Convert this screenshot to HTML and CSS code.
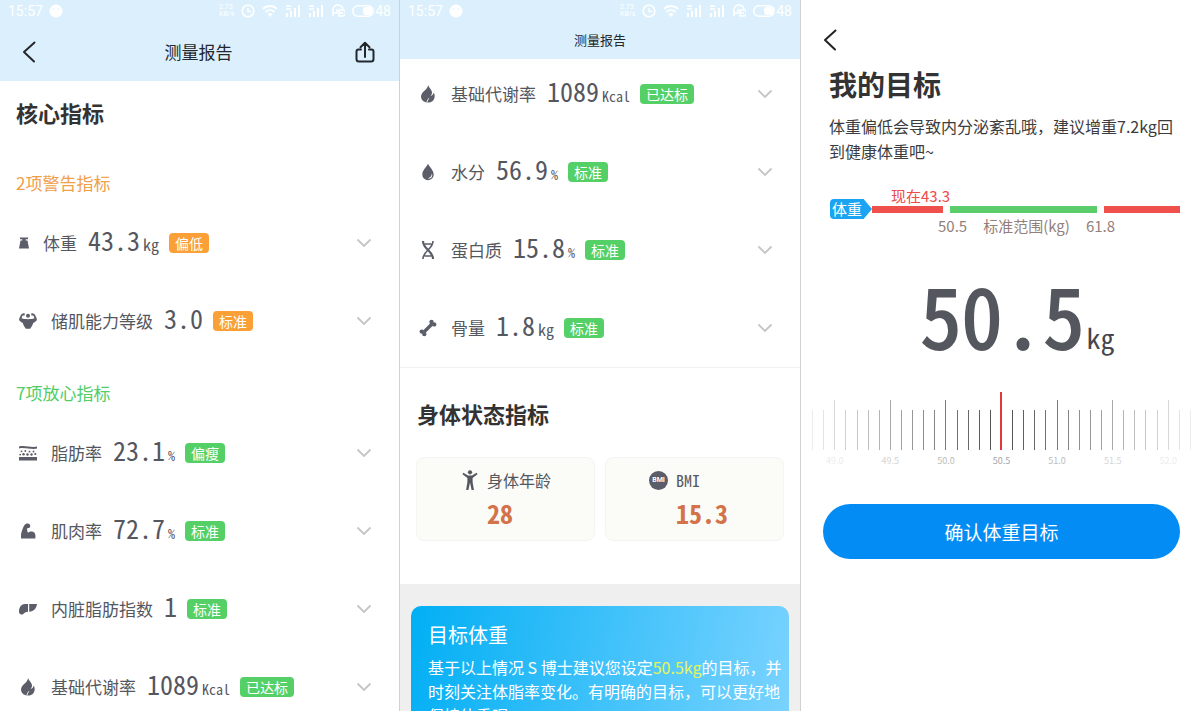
FILE: index.html
```html
<!DOCTYPE html>
<html lang="zh-CN">
<head>
  <meta charset="UTF-8" />
  <title>测量报告</title>
  <meta name="viewport" content="width=device-width, initial-scale=1" />
  <link rel="stylesheet" href="styles.css">
</head>
<body>
  <!-- Shared icons -->
  <svg class="sprite" aria-hidden="true">
    <symbol id="i-back" viewBox="0 0 14 22"><path d="M12.5 1.5 2 11l10 9.500" fill="none" stroke="currentColor" stroke-width="2" stroke-linecap="round" stroke-linejoin="round"/></symbol>
    <symbol id="i-share" viewBox="0 0 20 22"><path d="M6 8.500H3.500A2 2 0 0 0 1.500 10.500V18a2.500 2.500 0 0 0 2.500 2.500h12a2.500 2.500 0 0 0 2.500-2.500v-7.500a2 2 0 0 0-2-2H14M10 16V2M5.500 6.200 10 1.700l4.500 4.500" fill="none" stroke="currentColor" stroke-width="2" stroke-linecap="round" stroke-linejoin="round"/></symbol>
    <symbol id="i-down" viewBox="0 0 16 10"><path d="M1.500 1.500 8 8l6.500-6.500" fill="none" stroke="currentColor" stroke-width="1.800"/></symbol>
    <symbol id="i-weight" viewBox="0 0 10 12"><path d="M1 .5h8v1.800H6.700v1.200H8.500L10 11.500H0L1.500 3.500h1.800V2.300H1z"/></symbol>
    <symbol id="i-body" viewBox="0 0 18 18"><circle cx="9" cy="3.800" r="2"/><path d="M5.800 1.500 5.600 3.600 3.600 3.600 2.500 6.200C4.500 7.300 6.500 6.800 9 7.300c2.500-.5 4.500 0 6.500-1.100l-1.100-2.600h-2L12.200 1.500c1.600-.5 3.100.2 4 1.700.9 1.500 1.600 3.200 1.700 4.800-.8 1.600-2.500 2.200-3.700 3-.5 2-1.700 3.900-3 5.700H6.800C5.500 14.900 4.300 13 3.800 11 2.600 10.200.9 9.600.1 8c.1-1.600.8-3.300 1.700-4.800.9-1.500 2.400-2.200 4-1.700z"/></symbol>
    <symbol id="i-fat" viewBox="0 0 18 18"><path d="M0 2.500c3-1 6-.4 9-.1s6 .8 9 .2v2c-3 .6-6 .1-9-.2S3 3.600 0 4.500zM0 13h18v3.500H0z"/><circle cx="2.500" cy="7.300" r=".9"/><circle cx="6.300" cy="7" r=".9"/><circle cx="10.500" cy="7.600" r=".9"/><circle cx="14.500" cy="7.500" r=".9"/><circle cx="4.500" cy="10.300" r="1.200"/><circle cx="8.500" cy="10.500" r="1.200"/><circle cx="12.500" cy="10.500" r="1.200"/><circle cx="16.300" cy="10" r="1.100"/><circle cx="1.200" cy="10.600" r=".9"/></symbol>
    <symbol id="i-arm" viewBox="0 0 18 18"><path d="M2 16.500V12.500C2.500 9 4 5.500 5.500 3 6.800.9 9.600.9 11 2.800c.6 1.200.2 2.700-1 3.200H8.300c-.4 1.900-.1 3.600.8 4.800 1.800-1.800 5-1.900 6.600.2.800 1.300.9 3.500.6 5.500z"/></symbol>
    <symbol id="i-liver" viewBox="0 0 18 18"><path d="M9 4v7.700c-2.500 0-3.500 1.200-5 2.500C2 15.200 0 14 0 11.500 0 7 2.500 4 6 4zM10.200 4H18c-.5 4.500-3.200 7.300-7.800 7.700z"/></symbol>
    <symbol id="i-fire" viewBox="0 0 18 18"><path d="M9.200 0c.6 3 4 4.700 3.800 7.700 0 1.300-.7 2.200-1.500 3.300 1.500-.3 2.800-1.500 3.300-3.500C17 12 15 16.600 10.500 17.500H7.700C3.200 16.700 1 13 2.500 9.500 3.700 6.300 8.400 4.500 9.200 0z"/><path d="M9.800 13.300c-.7 1.400-1.800 2.200-1.800 4.200" fill="none" stroke="#fff" stroke-width="1"/></symbol>
    <symbol id="i-drop" viewBox="0 0 18 18"><path fill-rule="evenodd" d="M9 .8c1.500 3.500 5.700 6.500 5.700 10.700A5.700 5.700 0 0 1 9 17.200a5.700 5.700 0 0 1-5.700-5.700C3.300 7.300 7.500 4.300 9 .8zm3.900 9.700c-.3 2.500-1.700 4.300-4.200 4.800 2.900 1.200 5.400-1.700 4.200-4.800z"/></symbol>
    <symbol id="i-dna" viewBox="0 0 18 18"><path d="M4 0c0 8.500 10 9.500 10 18" fill="none" stroke="currentColor" stroke-width="2.200"/><path d="M14 0c0 8.500-10 9.500-10 18M5.500 3h7M5.500 15h7" fill="none" stroke="currentColor" stroke-width="1.600"/></symbol>
    <symbol id="i-bone" viewBox="0 0 18 18"><path d="M5 13 13 5" stroke="currentColor" stroke-width="3.400"/><circle cx="12.500" cy="3" r="2.200"/><circle cx="15.200" cy="5.400" r="2.200"/><circle cx="2.800" cy="12.600" r="2.200"/><circle cx="5.300" cy="15.100" r="2.200"/></symbol>
    <symbol id="i-person" viewBox="0 0 20 20"><circle cx="10" cy="2.300" r="2.100"/><path d="M3.300 2.800 8 5.600h4l4.700-2.800.8 1.400L12.600 8v4l1.300 8h-2.300L10 12.500 8.400 20H6.100l1.300-8V8L2.500 4.200z"/></symbol>
    <symbol id="i-face" viewBox="0 0 14 14"><circle cx="7" cy="7" r="6.500"/><path d="M4.500 4.500v1.500M9.500 4.500v1.500" stroke="#dbeffb" stroke-width="1.200"/></symbol>
    <symbol id="i-alarm" viewBox="0 0 14 14"><circle cx="7" cy="7" r="5.800" fill="none" stroke="currentColor" stroke-width="1.600"/><path d="M7 4v3.500h3" fill="none" stroke="currentColor" stroke-width="1.400"/></symbol>
    <symbol id="i-wifi" viewBox="0 0 16 14"><path d="M1 5c4-4 10-4 14 0M3.500 8c2.700-2.500 6.300-2.500 9 0" fill="none" stroke="currentColor" stroke-width="1.800"/><path d="M5.500 10c1.500-1.300 3.500-1.300 5 0L8 13z"/></symbol>
    <symbol id="i-signal" viewBox="0 0 16 14"><path d="M1 9h2v4H1zM5 7h2v6H5zM9 4h2v9H9zM13 1h2v12h-2z"/><path d="M1 2h5M1 5h5" stroke="currentColor" stroke-width="1.600"/></symbol>
    <symbol id="i-eco" viewBox="0 0 14 14"><path d="M2 12V7a5 5 0 0 1 10-2M2 9h4V5M8 6h3.500a2 2 0 0 1 0 6H8zM8 9h4" fill="none" stroke="currentColor" stroke-width="1.500"/></symbol>
    <symbol id="i-battery" viewBox="0 0 22 14"><rect x=".8" y="1.800" width="20.400" height="10.400" rx="5" fill="none" stroke="currentColor" stroke-width="1.500"/><rect x="11" y="3" width="9" height="8" rx="3"/></symbol>
  </svg>

  <main class="screens">
    <section class="phone phone-report">
      <header class="top">
        <div class="status">
          <span>15:57</span>
          <svg class="s14"><use href="#i-face"/></svg>
          <div class="status-right">
            <span class="net"><span>2.73</span><span>KB/s</span></span>
            <svg class="s14"><use href="#i-alarm"/></svg>
            <svg class="s16"><use href="#i-wifi"/></svg>
            <svg class="s16"><use href="#i-signal"/></svg>
            <svg class="s16"><use href="#i-signal"/></svg>
            <svg class="s14"><use href="#i-eco"/></svg>
            <span class="battery"><svg class="s22"><use href="#i-battery"/></svg>48</span>
          </div>
        </div>
        <nav class="nav">
          <button class="icon-btn" aria-label="返回"><svg class="back"><use href="#i-back"/></svg></button>
          <h1>测量报告</h1>
          <button class="icon-btn" aria-label="分享"><svg class="share"><use href="#i-share"/></svg></button>
        </nav>
      </header>

      <h2 class="title-core">核心指标</h2>

      <h3 class="group warn">2项警告指标</h3>
      <ul class="list">
        <li><button class="row"><svg class="icon icon-slim"><use href="#i-weight"/></svg><span class="name">体重</span><span class="value"><b>43.3</b><i class="kg">kg</i></span><span class="tag orange">偏低</span><svg class="down"><use href="#i-down"/></svg></button></li>
        <li><button class="row"><svg class="icon"><use href="#i-body"/></svg><span class="name">储肌能力等级</span><span class="value"><b>3.0</b></span><span class="tag orange">标准</span><svg class="down"><use href="#i-down"/></svg></button></li>
      </ul>

      <h3 class="group good">7项放心指标</h3>
      <ul class="list">
        <li><button class="row"><svg class="icon"><use href="#i-fat"/></svg><span class="name">脂肪率</span><span class="value"><b>23.1</b><i>%</i></span><span class="tag">偏瘦</span><svg class="down"><use href="#i-down"/></svg></button></li>
        <li><button class="row"><svg class="icon"><use href="#i-arm"/></svg><span class="name">肌肉率</span><span class="value"><b>72.7</b><i>%</i></span><span class="tag">标准</span><svg class="down"><use href="#i-down"/></svg></button></li>
        <li><button class="row"><svg class="icon"><use href="#i-liver"/></svg><span class="name">内脏脂肪指数</span><span class="value"><b>1</b></span><span class="tag">标准</span><svg class="down"><use href="#i-down"/></svg></button></li>
        <li><button class="row"><svg class="icon"><use href="#i-fire"/></svg><span class="name">基础代谢率</span><span class="value"><b>1089</b><i>Kcal</i></span><span class="tag">已达标</span><svg class="down"><use href="#i-down"/></svg></button></li>
      </ul>
    </section>

    <section class="phone phone-state">
      <header class="top">
        <div class="status">
          <span>15:57</span>
          <svg class="s14"><use href="#i-face"/></svg>
          <div class="status-right">
            <span class="net"><span>2.73</span><span>KB/s</span></span>
            <svg class="s14"><use href="#i-alarm"/></svg>
            <svg class="s16"><use href="#i-wifi"/></svg>
            <svg class="s16"><use href="#i-signal"/></svg>
            <svg class="s16"><use href="#i-signal"/></svg>
            <svg class="s14"><use href="#i-eco"/></svg>
            <span class="battery"><svg class="s22"><use href="#i-battery"/></svg>48</span>
          </div>
        </div>
        <div class="nav-small"><h1>测量报告</h1></div>
      </header>

      <ul class="list list-scrolled">
        <li><button class="row"><svg class="icon"><use href="#i-fire"/></svg><span class="name">基础代谢率</span><span class="value"><b>1089</b><i>Kcal</i></span><span class="tag">已达标</span><svg class="down"><use href="#i-down"/></svg></button></li>
        <li><button class="row"><svg class="icon"><use href="#i-drop"/></svg><span class="name">水分</span><span class="value"><b>56.9</b><i>%</i></span><span class="tag">标准</span><svg class="down"><use href="#i-down"/></svg></button></li>
        <li><button class="row"><svg class="icon"><use href="#i-dna"/></svg><span class="name">蛋白质</span><span class="value"><b>15.8</b><i>%</i></span><span class="tag">标准</span><svg class="down"><use href="#i-down"/></svg></button></li>
        <li><button class="row"><svg class="icon"><use href="#i-bone"/></svg><span class="name">骨量</span><span class="value"><b>1.8</b><i class="kg">kg</i></span><span class="tag">标准</span><svg class="down"><use href="#i-down"/></svg></button></li>
      </ul>

      <h2 class="title-state">身体状态指标</h2>
      <div class="cards">
        <div class="card">
          <svg class="card-icon"><use href="#i-person"/></svg>
          <span class="card-name">身体年龄</span>
          <strong>28</strong>
        </div>
        <div class="card">
          <span class="bmi-dot">BMI</span>
          <span class="card-name">BMI</span>
          <strong>15.3</strong>
        </div>
      </div>

      <div class="advice-wrap">
        <article class="advice">
          <h2>目标体重</h2>
          <p>基于以上情况&nbsp;S&nbsp;博士建议您设定<em>50.5kg</em>的目标，并时刻关注体脂率变化。有明确的目标，可以更好地保持体重呢</p>
        </article>
      </div>
    </section>

    <section class="phone phone-goal">
      <button class="icon-btn" aria-label="返回"><svg class="back"><use href="#i-back"/></svg></button>
      <h1>我的目标</h1>
      <p class="tip">体重偏低会导致内分泌紊乱哦，建议增重7.2kg回到健康体重吧~</p>

      <div class="range">
        <span class="range-tag">体重</span>
        <div class="track">
          <span class="low"></span>
          <span class="mid"></span>
          <span class="high"></span>
          <span class="now">现在43.3</span>
        </div>
      </div>
      <div class="range-text"><span>50.5</span><span>标准范围(kg)</span><span>61.8</span></div>

      <div class="target"><b>50.5</b><span>kg</span></div>
      <div class="ruler" id="ruler"></div>
      <button class="confirm">确认体重目标</button>
    </section>
  </main>

  <script>
    const ruler = document.getElementById("ruler");
    const current = 50.5;

    // 17 ticks of 0.1kg on each side, fading towards the edges
    for (let i = -17; i <= 17; i++) {
      const tick = document.createElement("div");
      tick.className = "tick";
      tick.style.opacity = 1 - Math.abs(i) / 19;
      if (i % 5 === 0) {
        tick.classList.add("major");
        tick.innerHTML = `<span>${(current + i / 10).toFixed(1)}</span>`;
      }
      if (i === 0) tick.classList.add("current");
      ruler.appendChild(tick);
    }
  </script>
</body>
</html>
```
FILE: styles.css
```css
* {
  box-sizing: border-box;
}
body {
  margin: 0;
  font-family: "Noto Sans CJK SC", sans-serif;
  background: #fff;
  color: #55575f;
}
h1, h2, h3, p, ul {
  margin: 0;
  padding: 0;
}
ul {
  list-style: none;
}
button {
  font: inherit;
  color: inherit;
  border: none;
  background: none;
  padding: 0;
  cursor: pointer;
}
svg {
  display: block;
  flex: none;
  fill: currentColor;
}
.sprite {
  position: absolute;
  width: 0;
  height: 0;
}
.screens {
  display: grid;
  grid-template-columns: repeat(3, 1fr);
  height: 100vh;
  overflow: hidden;
}
.phone {
  min-width: 0;
  overflow: hidden;
}
.phone-report {
  border-right: 1px solid #cfd0d4;
}
.phone-goal {
  border-left: 1px solid #cfd0d4;
}

/* header */
.top {
  background: #dbf0fc;
  color: #24272c;
}
.status {
  display: flex;
  align-items: center;
  gap: 6px;
  height: 24px;
  padding: 0 8px 2px;
  color: #fff;
  font: 400 14px/20px Roboto, sans-serif;
}
.status-right {
  display: flex;
  align-items: center;
  gap: 7px;
  margin-left: auto;
}
.net {
  display: flex;
  flex-direction: column;
  font-size: 7px;
  line-height: 7px;
}
.battery {
  display: flex;
  align-items: center;
  gap: 1px;
}
.s14 {
  width: 14px;
  height: 14px;
}
.s16 {
  width: 16px;
  height: 14px;
}
.s22 {
  width: 22px;
  height: 14px;
}
.nav {
  display: grid;
  grid-template-columns: 1fr auto 1fr;
  align-items: center;
  height: 57px;
  padding: 0 24px 2px 22px;
}
.nav h1 {
  font-size: 17px;
  line-height: 24px;
  font-weight: 400;
}
.nav .icon-btn:last-child {
  justify-self: end;
}
.nav-small {
  height: 35px;
  padding-top: 4px;
  text-align: center;
}
.nav-small h1 {
  font-size: 13px;
  line-height: 24px;
  font-weight: 400;
}
.back {
  width: 14px;
  height: 22px;
}
.share {
  width: 20px;
  height: 22px;
}

/* indicator lists */
.phone h2 {
  font-size: 22px;
  line-height: 30px;
  color: #333;
}
.title-core {
  padding: 16px 16px 23px;
}
.title-state {
  padding: 30px 17px 29px;
}
.group {
  padding: 21px 16px 9px;
  font-size: 17px;
  line-height: 24px;
  font-weight: 400;
}
.warn {
  color: #f0a04b;
}
.good {
  color: #50cd66;
}
.row {
  display: flex;
  align-items: center;
  width: 100%;
  height: 78px;
  padding: 0 27px 0 19px;
}
.list-scrolled {
  margin-top: -4px;
  border-bottom: 1px solid #f1f1f2;
}
.icon {
  width: 18px;
  height: 18px;
  margin-right: 14px;
  color: #5b5d68;
}
.icon-slim {
  width: 10px;
  height: 12px;
}
.name {
  font-size: 17px;
  line-height: 24px;
}
.value {
  display: flex;
  align-items: baseline;
  gap: 3px;
  margin: 0 10px 0 11px;
  padding-bottom: 6px;
  font-feature-settings: "hwid";
}
.value b {
  font-size: 26px;
  line-height: 36px;
  font-weight: 400;
}
.value i {
  font-size: 14px;
  font-style: normal;
}
.value .kg {
  font-size: 16px;
}
.tag {
  padding: 0 6px;
  border-radius: 4px;
  background: #55d067;
  color: #fff;
  font-size: 14px;
  line-height: 20px;
}
.orange {
  background: #fb9f37;
}
.down {
  width: 16px;
  height: 10px;
  margin-left: auto;
  color: #c5c5c8;
}

/* body state */
.cards {
  display: grid;
  grid-template-columns: 1fr 1fr;
  gap: 10px;
  padding: 0 16px 43px;
}
.card {
  display: grid;
  grid-template-columns: 20px 64px;
  justify-content: center;
  align-items: center;
  column-gap: 7px;
  padding: 7px 0 9px;
  border: 1px solid #f4f4f1;
  border-radius: 8px;
  background: #fbfbf8;
}
.card-icon {
  width: 20px;
  height: 20px;
}
.bmi-dot {
  width: 19px;
  border-radius: 50%;
  background: #5b5d68;
  color: #fff;
  font: 700 7px/19px Roboto, sans-serif;
  text-align: center;
}
.card-name {
  font-size: 16px;
  line-height: 30px;
  font-feature-settings: "hwid";
}
.card strong {
  grid-column: 2;
  font-size: 26px;
  line-height: 36px;
  color: #d3734a;
  font-feature-settings: "hwid";
}
.advice-wrap {
  padding: 22px 11px;
  background: #efefef;
}
.advice {
  padding: 14px 4px 20px 17px;
  border-radius: 10px;
  background: linear-gradient(100deg, #02aff4, #7bd3ff);
  color: #fff;
}
.advice h2 {
  color: #fff;
  font-size: 20px;
  font-weight: 400;
}
.advice p {
  padding-top: 5px;
  font-size: 16px;
  line-height: 24px;
}
.advice em {
  color: #e6f55a;
  font-style: normal;
}

/* goal */
.phone-goal {
  padding: 29px 20px 0 22px;
}
.phone-goal .icon-btn {
  color: #222;
}
.phone-goal h1 {
  padding: 8px 6px 0;
  font-size: 28px;
  line-height: 40px;
  color: #333;
}
.tip {
  padding: 10px 0 0 6px;
  font-size: 16px;
  line-height: 25px;
  color: #3c3c3e;
}
.range {
  display: flex;
  align-items: center;
  padding: 35px 0 0 7px;
}
.range-tag {
  width: 42px;
  padding-left: 2px;
  border-radius: 4px;
  background: #1ba4f2;
  clip-path: polygon(0 0, 80% 0, 100% 50%, 80% 100%, 0 100%);
  color: #fff;
  font-size: 15px;
  line-height: 20px;
}
.track {
  position: relative;
  display: grid;
  grid-template-columns: 71fr 148fr 76fr;
  gap: 7px;
  flex: 1;
  height: 7px;
}
.low, .high {
  background: #f0504b;
}
.mid {
  background: #5bce6b;
}
.now {
  position: absolute;
  bottom: 6px;
  left: 19px;
  font-size: 15px;
  line-height: 22px;
  color: #ee4b49;
}
.range-text {
  display: flex;
  gap: 16px;
  padding-left: 115px;
  font-size: 15px;
  line-height: 14px;
  color: #94807a;
}
.target {
  display: flex;
  align-items: baseline;
  justify-content: center;
  gap: 2px;
  padding: 31px 0 0 32px;
  font-feature-settings: "hwid";
}
.target b {
  font-size: 82px;
  line-height: 100px;
  font-weight: 400;
  -webkit-text-stroke: 2px;
}
.target span {
  font-size: 28px;
  color: #46474d;
}
.ruler {
  display: grid;
  grid-template-columns: repeat(35, minmax(0, 1fr));
  height: 78px;
  margin: 28px -16px 0;
}
.tick {
  display: flex;
  flex-direction: column;
  align-items: center;
  padding-top: 18px;
}
.tick::before {
  content: "";
  width: 1px;
  height: 40px;
  flex: none;
  background: #4c4c50;
}
.major {
  padding-top: 8px;
}
.major::before {
  height: 50px;
}
.current {
  padding-top: 0;
}
.current::before {
  width: 2px;
  height: 58px;
  background: #e0393b;
}
.tick span {
  padding-top: 2px;
  font-size: 9px;
  line-height: 18px;
  color: #a5a5a8;
}
.confirm {
  display: block;
  width: 100%;
  margin-top: 34px;
  border-radius: 28px;
  background: #038cf4;
  color: #fff;
  font-size: 19px;
  line-height: 55px;
}
```
